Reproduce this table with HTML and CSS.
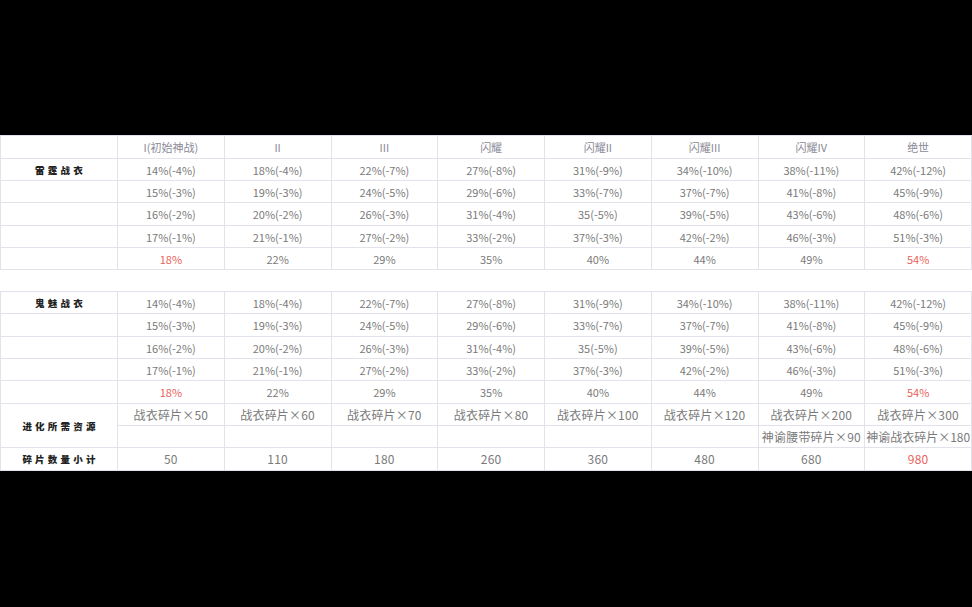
FILE: index.html
```html
<!DOCTYPE html>
<html lang="zh">
<head>
<meta charset="utf-8">
<link rel="stylesheet" href="styles.css">
</head>
<body>
<div class="sheet">
<table class="grid">
<colgroup><col class="c0"><col><col><col><col><col><col><col><col></colgroup>
<tr class="head t"><td></td><td>I(初始神战)</td><td>II</td><td>III</td><td>闪耀</td><td>闪耀II</td><td>闪耀III</td><td>闪耀IV</td><td>绝世</td></tr>
<tr><td class="lbl">雷霆战衣</td><td>14%(-4%)</td><td>18%(-4%)</td><td>22%(-7%)</td><td>27%(-8%)</td><td>31%(-9%)</td><td>34%(-10%)</td><td>38%(-11%)</td><td>42%(-12%)</td></tr>
<tr><td></td><td>15%(-3%)</td><td>19%(-3%)</td><td>24%(-5%)</td><td>29%(-6%)</td><td>33%(-7%)</td><td>37%(-7%)</td><td>41%(-8%)</td><td>45%(-9%)</td></tr>
<tr class="t"><td></td><td>16%(-2%)</td><td>20%(-2%)</td><td>26%(-3%)</td><td>31%(-4%)</td><td>35(-5%)</td><td>39%(-5%)</td><td>43%(-6%)</td><td>48%(-6%)</td></tr>
<tr><td></td><td>17%(-1%)</td><td>21%(-1%)</td><td>27%(-2%)</td><td>33%(-2%)</td><td>37%(-3%)</td><td>42%(-2%)</td><td>46%(-3%)</td><td>51%(-3%)</td></tr>
<tr><td></td><td class="red">18%</td><td>22%</td><td>29%</td><td>35%</td><td>40%</td><td>44%</td><td>49%</td><td class="red">54%</td></tr>
<tr class="gap"><td colspan="9"></td></tr>
<tr><td class="lbl">鬼魅战衣</td><td>14%(-4%)</td><td>18%(-4%)</td><td>22%(-7%)</td><td>27%(-8%)</td><td>31%(-9%)</td><td>34%(-10%)</td><td>38%(-11%)</td><td>42%(-12%)</td></tr>
<tr class="t"><td></td><td>15%(-3%)</td><td>19%(-3%)</td><td>24%(-5%)</td><td>29%(-6%)</td><td>33%(-7%)</td><td>37%(-7%)</td><td>41%(-8%)</td><td>45%(-9%)</td></tr>
<tr><td></td><td>16%(-2%)</td><td>20%(-2%)</td><td>26%(-3%)</td><td>31%(-4%)</td><td>35(-5%)</td><td>39%(-5%)</td><td>43%(-6%)</td><td>48%(-6%)</td></tr>
<tr><td></td><td>17%(-1%)</td><td>21%(-1%)</td><td>27%(-2%)</td><td>33%(-2%)</td><td>37%(-3%)</td><td>42%(-2%)</td><td>46%(-3%)</td><td>51%(-3%)</td></tr>
<tr class="t"><td></td><td class="red">18%</td><td>22%</td><td>29%</td><td>35%</td><td>40%</td><td>44%</td><td>49%</td><td class="red">54%</td></tr>
<tr class="res"><td class="lbl" rowspan="2">进化所需资源</td><td>战衣碎片×50</td><td>战衣碎片×60</td><td>战衣碎片×70</td><td>战衣碎片×80</td><td>战衣碎片×100</td><td>战衣碎片×120</td><td>战衣碎片×200</td><td>战衣碎片×300</td></tr>
<tr class="res"><td></td><td></td><td></td><td></td><td></td><td></td><td>神谕腰带碎片×90</td><td class="tight">神谕战衣碎片×180</td></tr>
<tr class="res t"><td class="lbl">碎片数量小计</td><td>50</td><td>110</td><td>180</td><td>260</td><td>360</td><td>480</td><td>680</td><td class="red">980</td></tr>
</table>
</div>
</body>
</html>
```
FILE: styles.css
```css
html, body {
  margin: 0;
  padding: 0;
  background: #000;
  height: 100%;
}
body {
  font-family: "Noto Sans CJK SC", "Noto Sans", sans-serif;
}
.sheet {
  padding-top: 135px;
}
.grid {
  width: 972px;
  table-layout: fixed;
  border-collapse: collapse;
  background: #fff;
}
.grid .c0 {
  width: 117px;
}
.grid td {
  height: 21px;
  padding: 0;
  border: 1px solid #e2e2ea;
  text-align: center;
  vertical-align: middle;
  font-size: 11px;
  line-height: 14px;
  color: #7a7a7a;
  white-space: nowrap;
  overflow: hidden;
}
.grid tr.t td {
  height: 22px;
}
.grid tr.head td {
  color: #8a8a96;
}
.grid tr.res td {
  font-size: 12px;
  letter-spacing: 0.2px;
}
.grid tr td.tight {
  letter-spacing: 0;
}
.grid tr td.lbl {
  font-size: 9.5px;
  font-weight: 900;
  color: #222;
  letter-spacing: 3.2px;
  padding-left: 3px;
  font-family: "Noto Sans CJK SC", serif;
}
.grid tr td.red {
  color: #e8625c;
}
.grid tr.gap td {
  border-left: none;
  border-right: none;
}
```
